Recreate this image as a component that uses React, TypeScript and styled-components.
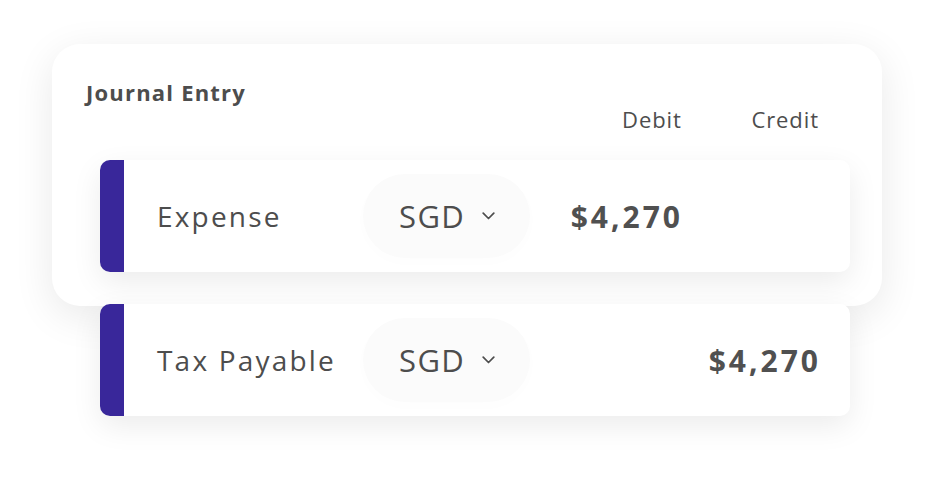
import { createGlobalStyle, styled } from 'styled-components';

const GlobalStyle = createGlobalStyle`
  body {
    margin: 0;
    background: #ffffff;
    font-family: 'Open Sans', 'Noto Sans', sans-serif;
    color: #4d4d4d;
  }
`;

const Page = styled.div`
  width: 934px;
  height: 496px;
  padding: 44px 0 0 52px;
  box-sizing: border-box;
`;

const Card = styled.div`
  width: 830px;
  height: 262px;
  box-sizing: border-box;
  padding: 34px 64px 0 34px;
  background: #fff;
  border-radius: 28px;
  box-shadow: 0 10px 40px rgba(0, 0, 0, 0.09);
  position: relative;
  z-index: 1;
`;

const Header = styled.div`
  display: flex;
  align-items: flex-start;
  height: 82px;
`;

const Title = styled.h3`
  margin: 0;
  font-size: 22px;
  line-height: 28px;
  font-weight: 700;
  letter-spacing: 1.2px;
  color: #4d4d4d;
`;

const Columns = styled.div`
  display: flex;
  margin-left: auto;
`;

const ColumnLabel = styled.div<{ $width: number }>`
  width: ${(p) => p.$width}px;
  margin-top: 27px;
  text-align: right;
  font-size: 22px;
  line-height: 28px;
  letter-spacing: 0.9px;
  margin-right: -0.9px;
  color: #4d4d4d;
`;

const Row = styled.div<{ $indent: number }>`
  display: flex;
  align-items: center;
  width: 750px;
  height: 112px;
  margin-left: ${(p) => p.$indent}px;
  background: #fff;
  border-radius: 10px;
  overflow: hidden;
  box-shadow: 0 10px 30px rgba(0, 0, 0, 0.08);
  position: relative;
  z-index: 2;
`;

const Bar = styled.div`
  width: 24px;
  align-self: stretch;
  background: #39279a;
`;

const Account = styled.div`
  width: 206px;
  margin-left: 33px;
  font-size: 28px;
  letter-spacing: 2.2px;
  color: #4d4d4d;
`;

const Select = styled.div`
  width: 167px;
  height: 84px;
  box-sizing: border-box;
  padding-left: 36px;
  display: flex;
  align-items: center;
  gap: 17px;
  border-radius: 42px;
  background: #fbfbfb;
  box-shadow: 0 4px 16px rgba(0, 0, 0, 0.012);
  font-size: 31px;
  letter-spacing: 1.4px;
  color: #4d4d4d;
`;

/* widths include the trailing letter-spacing (3px) after the last digit */
const Amount = styled.div<{ $width: number; $gap?: number }>`
  width: ${(p) => p.$width}px;
  margin-left: ${(p) => p.$gap ?? 0}px;
  flex-shrink: 0;
  text-align: right;
  font-weight: 700;
  font-size: 30px;
  letter-spacing: 3px;
  color: #505050;
`;

const SecondRow = styled.div`
  margin-top: -2px;
`;

const Chevron = () => (
  <svg width="13" height="8" viewBox="0 0 13 8" fill="none">
    <polyline points="1.2,1.2 6.5,6.5 11.8,1.2" stroke="#4d4d4d" strokeWidth="1.7" strokeLinecap="round" strokeLinejoin="round" />
  </svg>
);

const EntryRow = ({ label, debit, credit, indent }: { label: string; debit?: string; credit?: string; indent: number }) => (
  <Row $indent={indent}>
    <Bar />
    <Account>{label}</Account>
    <Select>
      SGD
      <Chevron />
    </Select>
    <Amount $width={115} $gap={38}>{debit}</Amount>
    <Amount $width={138}>{credit}</Amount>
  </Row>
);

const App = () => (
  <Page>
    <GlobalStyle />
    <Card>
      <Header>
        <Title>Journal Entry</Title>
        <Columns>
          <ColumnLabel $width={112}>Debit</ColumnLabel>
          <ColumnLabel $width={138}>Credit</ColumnLabel>
        </Columns>
      </Header>
      <EntryRow label="Expense" debit="$4,270" indent={14} />
    </Card>
    <SecondRow>
      <EntryRow label="Tax Payable" credit="$4,270" indent={48} />
    </SecondRow>
  </Page>
);

export default App;
